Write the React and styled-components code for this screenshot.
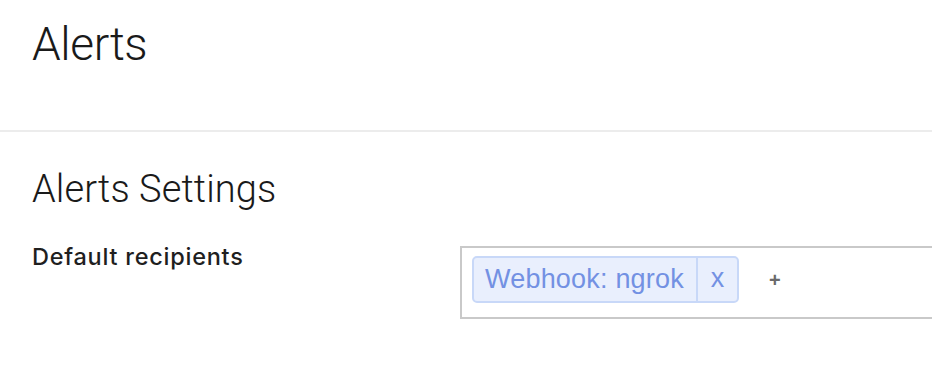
import React from 'react';
import styled, { createGlobalStyle } from 'styled-components';

const GlobalStyle = createGlobalStyle`
  html, body {
    margin: 0;
    padding: 0;
    background: #ffffff;
    overflow: hidden;
  }
  body {
    font-family: Roboto, "Liberation Sans", Arial, sans-serif;
    color: #1f1f1f;
  }
`;

const Page = styled.div`
  width: 932px;
  height: 366px;
  overflow: hidden;
`;

const Header = styled.header`
  padding: 0 32px;
  border-bottom: 2px solid #ececec;
  box-sizing: border-box;
  height: 132px;
`;

const PageTitle = styled.h1`
  margin: 0;
  padding-top: 17px;
  font-family: Roboto, "Liberation Sans", sans-serif;
  font-weight: 300;
  font-size: 46px;
  line-height: 54px;
  letter-spacing: -0.4px;
  color: #1a1a1a;
`;

const Section = styled.section`
  padding: 35px 0 0 32px;
`;

const SectionTitle = styled.h2`
  margin: 0;
  font-family: Roboto, "Liberation Sans", sans-serif;
  font-weight: 300;
  font-size: 38px;
  line-height: 44px;
  letter-spacing: 0.1px;
  color: #1a1a1a;
`;

const Row = styled.div`
  display: grid;
  grid-template-columns: 428px 520px;
  margin-top: 35px;
`;

const Label = styled.div`
  font-family: Inter, "Liberation Sans", sans-serif;
  font-weight: 500;
  font-size: 23.5px;
  line-height: 22px;
  letter-spacing: 0.75px;
  color: #1f1f1f;
`;

const TagInput = styled.div`
  display: flex;
  align-items: center;
  gap: 30px;
  box-sizing: border-box;
  height: 73px;
  padding: 0 10px 6px 10px;
  border: 2px solid #c9c9c9;
  background: #fff;
`;

const Tag = styled.div`
  display: flex;
  align-items: stretch;
  height: 47px;
  box-sizing: border-box;
  border: 2px solid #c8d8f8;
  border-radius: 5px;
  background: #e9effd;
  color: #7391e3;
  font-family: "Liberation Sans", Arial, sans-serif;
  font-size: 27px;
`;

const TagText = styled.span`
  display: flex;
  align-items: center;
  padding: 0 12px 0 11px;
  letter-spacing: 0.2px;
`;

const TagRemove = styled.span`
  display: flex;
  align-items: center;
  justify-content: center;
  width: 39px;
  border-left: 2px solid #c8d8f8;
  padding-bottom: 2px;
`;

const AddButton = styled.span`
  font-family: "Liberation Sans", Arial, sans-serif;
  font-weight: 700;
  font-size: 20px;
  color: #6a6a6a;
  line-height: 1;
`;

export default function App() {
  return (
    <Page>
      <GlobalStyle />
      <Header>
        <PageTitle>Alerts</PageTitle>
      </Header>
      <Section>
        <SectionTitle>Alerts Settings</SectionTitle>
        <Row>
          <Label>Default recipients</Label>
          <TagInput>
            <Tag>
              <TagText>Webhook: ngrok</TagText>
              <TagRemove>x</TagRemove>
            </Tag>
            <AddButton>+</AddButton>
          </TagInput>
        </Row>
      </Section>
    </Page>
  );
}
